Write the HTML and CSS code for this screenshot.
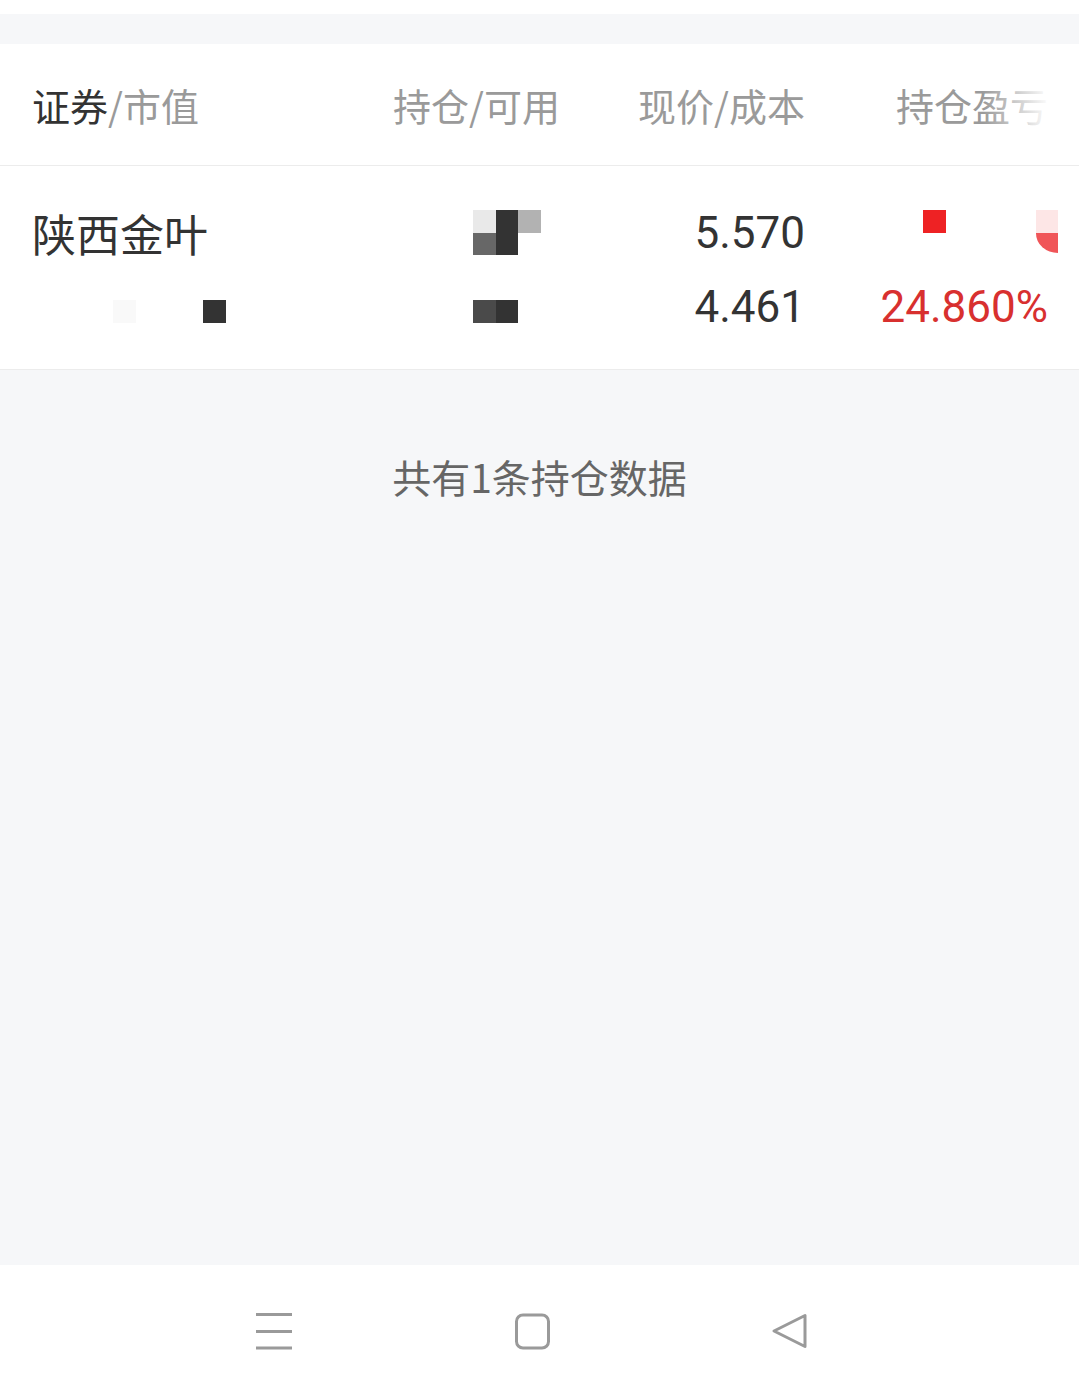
FILE: index.html
```html
<!DOCTYPE html>
<html lang="zh-CN">
<head>
    <meta charset="UTF-8">
    <meta name="viewport" content="width=device-width, initial-scale=1.0">
    <title>持仓</title>
    <link rel="stylesheet" href="styles.css">
</head>
<body>
    <div class="page">
        <div class="status-strip"></div>

        <main class="content">
            <div class="positions">
                <div class="thead">
                    <div class="th"><span class="strong">证券</span>/市值</div>
                    <div class="th right">持仓/可用</div>
                    <div class="th right">现价/成本</div>
                    <div class="th right">持仓盈亏</div>
                    <div class="fade"></div>
                </div>

                <div class="trow">
                    <div class="cell name">陕西金叶</div>
                    <div class="cell right"></div>
                    <div class="cell right num">5.570</div>
                    <div class="cell right num"></div>

                    <div class="cell"></div>
                    <div class="cell right"></div>
                    <div class="cell right num">4.461</div>
                    <div class="cell right num up">24.860%</div>

                    <!-- pixelated blocks hiding private figures -->
                    <div class="mosaic">
                        <span class="px c22 r1 light"></span>
                        <span class="px c23 r1 dark"></span>
                        <span class="px c24 r1 mid"></span>
                        <span class="px c22 r2 grey"></span>
                        <span class="px c23 r2 dark"></span>
                        <span class="px c22 r5 darkgrey"></span>
                        <span class="px c23 r5 dark"></span>
                        <span class="px c6 r5 faint"></span>
                        <span class="px c10 r5 dark"></span>
                        <span class="px c42 r1 red"></span>
                        <span class="px c47 r1 pink"></span>
                        <span class="px c47 r2 red-soft"></span>
                    </div>
                </div>
            </div>

            <p class="summary">共有1条持仓数据</p>
        </main>

        <nav class="navbar">
            <div class="nav-slot">
                <svg width="40" height="40" viewBox="0 0 40 40">
                    <path d="M2 3.5H38M2 20.5H38M2 37H38" stroke="#9a9a9a" stroke-width="3" fill="none"/>
                </svg>
            </div>
            <div class="nav-slot">
                <svg width="40" height="40" viewBox="0 0 40 40">
                    <rect x="4.5" y="4" width="32" height="33" rx="6.5" stroke="#9a9a9a" stroke-width="3" fill="none"/>
                </svg>
            </div>
            <div class="nav-slot">
                <svg width="40" height="40" viewBox="0 0 40 40">
                    <path d="M35 4.5V35.5L4 20Z" stroke="#9a9a9a" stroke-width="3" stroke-linejoin="round" fill="none"/>
                </svg>
            </div>
        </nav>
    </div>
</body>
</html>
```

FILE: styles.css
```css
body {
    margin: 0;
    font-family: "Noto Sans CJK SC", "Noto Sans", sans-serif;
    background: #f6f7f9;
}
.page {
    height: 1397px;
    display: flex;
    flex-direction: column;
    overflow: hidden;
}
.status-strip {
    height: 14px;
    background: #fff;
}
.content {
    flex: 1;
    padding-top: 30px;
}
.positions {
    background: #fff;
}
.thead, .trow {
    display: grid;
    grid-template-columns: 340px 188px 245px 243px;
    padding: 0 31px 0 32px;
    border-bottom: 1px solid #ececec;
    position: relative;
}
.thead {
    height: 121px;
    align-items: center;
}
.th {
    font-size: 38px;
    color: #9a9a9a;
    white-space: nowrap;
}
.strong {
    color: #333;
}
.right {
    text-align: right;
}
.fade {
    position: absolute;
    top: 0;
    bottom: 0;
    right: 0;
    width: 96px;
    background: linear-gradient(to right, rgba(255, 255, 255, 0), #fff 70%);
}
.trow {
    padding-top: 30px;
    padding-bottom: 25px;
    grid-auto-rows: 74px;
    align-items: center;
}
.cell {
    font-size: 44px;
    color: #333;
    line-height: 74px;
    height: 74px;
    white-space: nowrap;
}
.name {
    font-size: 44px;
}
.num {
    font-family: Roboto, "Liberation Sans", sans-serif;
}
.up {
    color: #d8302f;
}
.mosaic {
    position: absolute;
    left: 0.5px;
    top: 44px;
    display: grid;
    grid-template-columns: repeat(48, 22.5px);
    grid-template-rows: repeat(5, 22.5px);
}
.px { display: block; }
.c6 { grid-column: 6; }
.c10 { grid-column: 10; }
.c22 { grid-column: 22; }
.c23 { grid-column: 23; }
.c24 { grid-column: 24; }
.c42 { grid-column: 42; }
.c47 { grid-column: 47; }
.r1 { grid-row: 1; }
.r2 { grid-row: 2; }
.r5 { grid-row: 5; }
.light { background: #e9e9e9; }
.dark { background: #333; }
.mid { background: #b2b2b2; }
.grey { background: #676767; }
.darkgrey { background: #4a4a4a; }
.faint { background: #f9f9f9; }
.red { background: #ee2224; }
.pink { background: #fde6e6; }
.red-soft {
    background: #f05558;
    height: 20px;
    border-bottom-left-radius: 100% 100%;
}
.summary {
    margin: 0;
    padding-top: 85px;
    line-height: 42px;
    font-size: 39px;
    color: #666;
    text-align: center;
}
.navbar {
    height: 132px;
    background: #fff;
    display: flex;
    justify-content: center;
    align-items: center;
    padding-right: 15px;
}
.nav-slot {
    width: 258px;
    display: flex;
    justify-content: center;
}
.nav-slot svg {
    display: block;
}
```
